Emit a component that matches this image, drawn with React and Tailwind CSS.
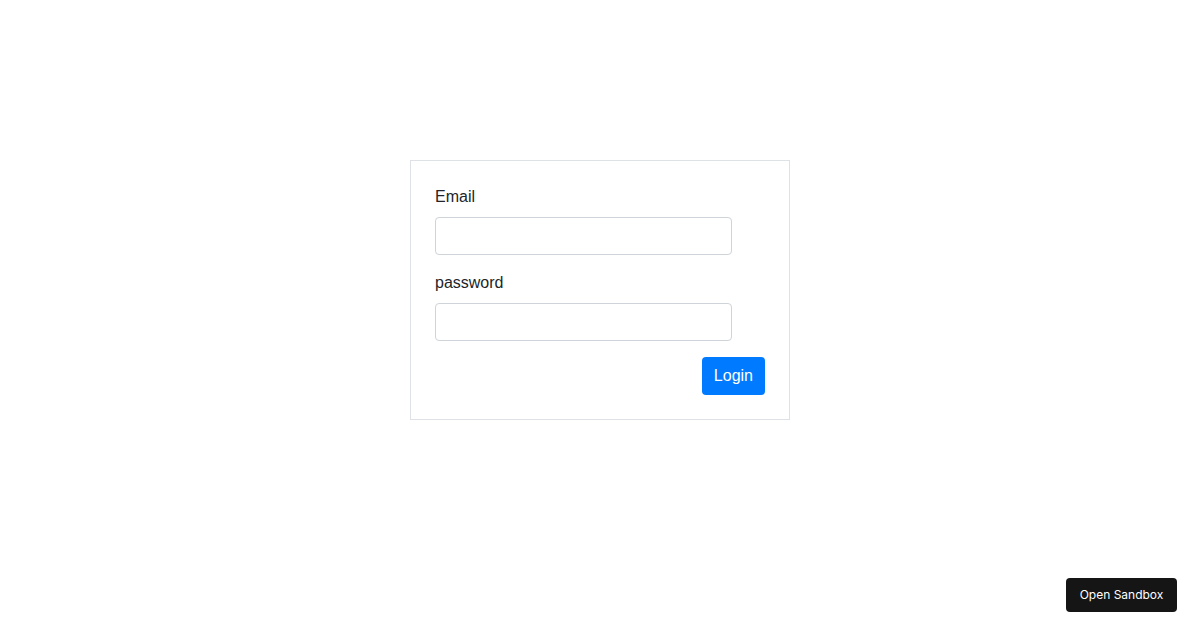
import React from 'react';

const App = () => {
  return (
    <div className="relative w-full h-[630px] bg-white text-[#212529] font-['Liberation_Sans',Arial,sans-serif]">
      <div className="flex justify-center pt-[160px]">
        <form className="w-[380px] border border-[#dee2e6] p-6" onSubmit={(e) => e.preventDefault()}>
          <div className="mb-4">
            <label className="block text-base leading-6 mb-2">Email</label>
            <input
              type="email"
              className="block w-[90%] h-[38px] px-3 border border-[#ced4da] rounded bg-white outline-none"
            />
          </div>
          <div className="mb-4">
            <label className="block text-base leading-6 mb-2">password</label>
            <input
              type="password"
              className="block w-[90%] h-[38px] px-3 border border-[#ced4da] rounded bg-white outline-none"
            />
          </div>
          <div className="flex justify-end">
            <button
              type="submit"
              className="h-[38px] px-3 rounded bg-[#007bff] text-white text-base leading-6"
            >
              Login
            </button>
          </div>
        </form>
      </div>

      {/* Open Sandbox */}
      <button className="absolute right-[23px] bottom-[18px] h-[34px] w-[111px] rounded bg-[#151515] text-white text-[12px] font-['Inter',sans-serif]">
        Open Sandbox
      </button>
    </div>
  );
};

export default App;
